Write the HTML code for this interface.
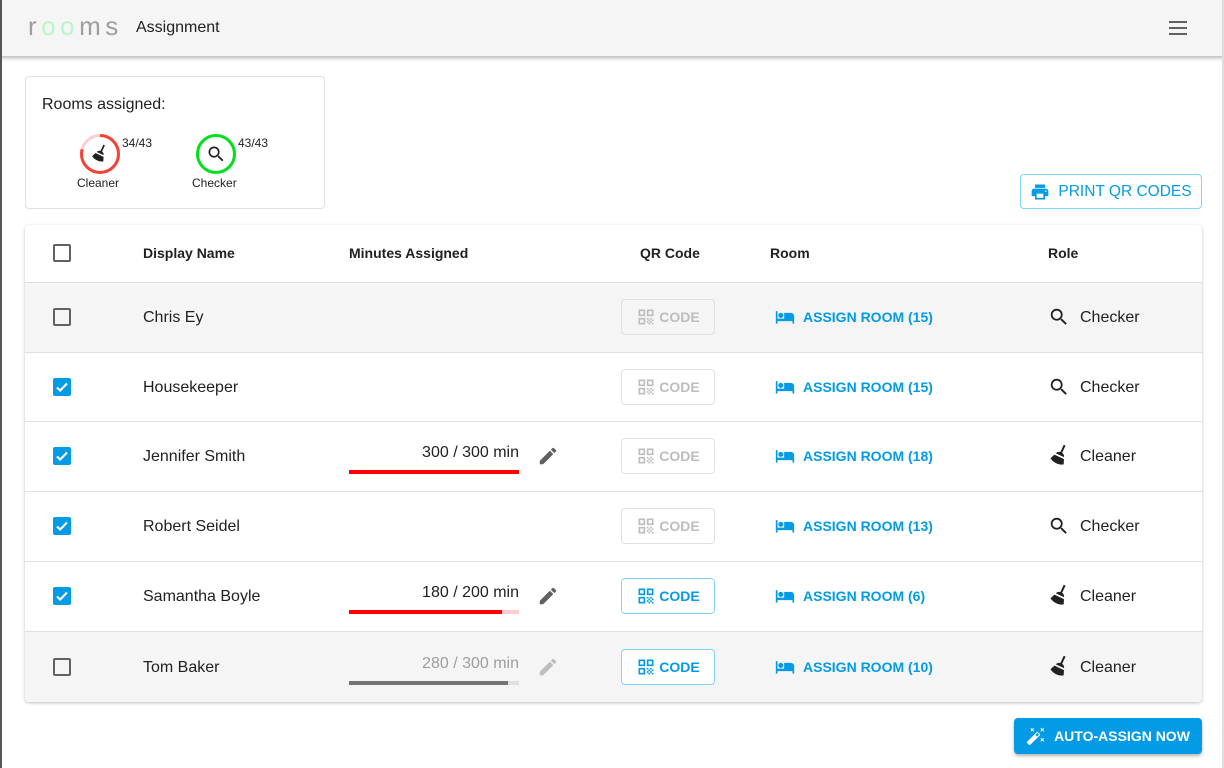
<!DOCTYPE html>
<html><head><meta charset="utf-8"><style>
*{box-sizing:border-box;margin:0;padding:0}
body{width:1224px;height:768px;overflow:hidden;background:#fff;font-family:"Liberation Sans",sans-serif;color:#212121;position:relative}
.abs{position:absolute}
.hdr{left:0;top:0;width:1224px;height:56px;background:#f5f5f5;box-shadow:0 2px 4px rgba(0,0,0,.3);z-index:2}
.card{background:#fff;border-radius:4px}
.row{left:25px;width:1177px;height:70px;border-top:1px solid #e0e0e0}
.cb{width:18px;height:18px;border:2px solid #616161;border-radius:2px}
.cbon{width:18px;height:18px;background:#039be5;border-radius:2px}
.t{font-size:16px;white-space:nowrap}
.btn{border:1px solid #81d4fa;border-radius:4px;color:#039be5;font-size:14px;display:flex;align-items:center;justify-content:center;gap:3px;background:#fff}
.dis{border-color:#e0e0e0;color:#bdbdbd;background:transparent}
.link{color:#039be5;font-size:14px;font-weight:bold;display:flex;align-items:center;gap:8px;white-space:nowrap}
</style></head><body>
<div class="abs" style="left:0;top:0;width:2px;height:768px;background:#555;z-index:3"></div>
<div class="abs" style="left:1222px;top:0;width:2px;height:768px;background:#ddd;z-index:3"></div>
<div class="abs hdr">
 <div class="abs" style="left:28px;top:11px;font-size:26px;letter-spacing:4.5px;color:#9e9e9e"><span>r</span><span style="color:#b9f6ca">oo</span><span>ms</span></div>
 <div class="abs t" style="left:136px;top:19px">Assignment</div>
 <svg class="abs" style="left:1168px;top:19px" width="20" height="18" viewBox="0 0 20 18"><rect x="1" y="2" width="18" height="2" fill="#616161"/><rect x="1" y="8" width="18" height="2" fill="#616161"/><rect x="1" y="14" width="18" height="2" fill="#616161"/></svg>
</div>

<div class="abs card" style="left:25px;top:76px;width:300px;height:133px;border:1px solid #e0e0e0">
 <div class="abs t" style="left:16px;top:19px">Rooms assigned:</div>
 <svg class="abs" style="left:52px;top:56px" width="44" height="44" viewBox="0 0 44 44">
  <circle cx="22" cy="21" r="18.5" fill="none" stroke="#ffcdd2" stroke-width="3"/>
  <circle cx="22" cy="21" r="18.5" fill="none" stroke="#f44336" stroke-width="3" stroke-dasharray="91.8 200" transform="rotate(-90 22 21)"/>
  <g transform="translate(12 11) scale(.85)"><path fill="#212121" transform="rotate(-20 12 12)" d="M19.36,2.72L20.78,4.14L15.06,9.85C16.13,11.39 16.28,13.24 15.38,14.44L9.06,8.12C10.26,7.22 12.11,7.37 13.65,8.44L19.36,2.72M5.93,17.57C3.92,15.56 2.69,13.16 2.35,10.92L7.23,8.83L14.67,16.27L12.58,21.15C10.34,20.81 7.94,19.58 5.93,17.57Z"/></g>
 </svg>
 <div class="abs" style="left:96px;top:59px;font-size:12px">34/43</div>
 <div class="abs" style="left:51px;top:99px;font-size:12px">Cleaner</div>
 <svg class="abs" style="left:168px;top:56px" width="44" height="44" viewBox="0 0 44 44">
  <circle cx="22" cy="21" r="18.5" fill="none" stroke="#00e01a" stroke-width="3"/>
  <g transform="translate(12 11) scale(.85)"><path fill="#212121" d="M15.5 14h-.79l-.28-.27A6.471 6.471 0 0 0 16 9.5 6.5 6.5 0 1 0 9.5 16c1.61 0 3.090-.59 4.23-1.57l.27.28v.79l5 4.99L20.49 19l-4.99-5zm-6 0C7.01 14 5 11.99 5 9.5S7.01 5 9.5 5 14 7.01 14 9.5 11.99 14 9.5 14z"/></g>
 </svg>
 <div class="abs" style="left:212px;top:59px;font-size:12px">43/43</div>
 <div class="abs" style="left:166px;top:99px;font-size:12px">Checker</div>
</div>

<div class="abs btn" style="left:1020px;top:174px;width:182px;height:35px;font-size:15.5px;gap:8px">
 <svg width="20" height="20" viewBox="0 0 24 24"><path fill="#039be5" d="M19 8H5c-1.66 0-3 1.34-3 3v6h4v4h12v-4h4v-6c0-1.660-1.34-3-3-3zm-3 11H8v-5h8v5zm3-7c-.55 0-1-.45-1-1s.45-1 1-1 1 .45 1 1-.45 1-1 1zm-1-9H6v4h12V3z"/></svg>PRINT QR CODES</div>

<div class="abs card" style="left:25px;top:225px;width:1177px;height:477px;box-shadow:0 1px 3px rgba(0,0,0,.25)"></div>
<div class="abs cb" style="left:53px;top:244px"></div>
<div class="abs t" style="left:143px;top:245px;font-size:14px;font-weight:bold">Display Name</div>
<div class="abs t" style="left:349px;top:245px;font-size:14px;font-weight:bold">Minutes Assigned</div>
<div class="abs t" style="left:640px;top:245px;font-size:14px;font-weight:bold">QR Code</div>
<div class="abs t" style="left:770px;top:245px;font-size:14px;font-weight:bold">Room</div>
<div class="abs t" style="left:1048px;top:245px;font-size:14px;font-weight:bold">Role</div>

<div id="rows"></div>
<script>
var Q='M3 11h8V3H3v8zm2-6h4v4H5V5zM3 21h8v-8H3v8zm2-6h4v4H5v-4zM13 3v8h8V3h-8zm6 6h-4V5h4v4zM19 19h2v2h-2zM13 13h2v2h-2zM15 15h2v2h-2zM13 17h2v2h-2zM15 19h2v2h-2zM17 17h2v2h-2zM17 13h2v2h-2zM19 15h2v2h-2z';
var B='M7 13c1.66 0 3-1.34 3-3S8.66 7 7 7s-3 1.34-3 3 1.34 3 3 3zm12-6h-8v7H3V5H1v15h2v-3h18v3h2v-9c0-2.21-1.79-4-4-4z';
var P='M3 17.25V21h3.75L17.81 9.94l-3.75-3.75L3 17.25zM20.71 7.04a.996.996 0 0 0 0-1.41l-2.34-2.34a.996.996 0 0 0-1.41 0l-1.83 1.83 3.75 3.75 1.83-1.83z';
var S='M15.5 14h-.79l-.28-.27A6.471 6.471 0 0 0 16 9.5 6.5 6.5 0 1 0 9.5 16c1.61 0 3.09-.59 4.23-1.57l.27.28v.79l5 4.99L20.49 19l-4.99-5zm-6 0C7.01 14 5 11.99 5 9.5S7.01 5 9.5 5 14 7.01 14 9.5 11.99 14 9.5 14z';
var BR='M19.36,2.72L20.78,4.14L15.06,9.85C16.13,11.39 16.28,13.24 15.38,14.44L9.06,8.12C10.26,7.22 12.11,7.37 13.650,8.44L19.36,2.72M5.93,17.57C3.92,15.56 2.69,13.16 2.35,10.92L7.23,8.830L14.67,16.27L12.58,21.15C10.34,20.81 7.94,19.58 5.93,17.57Z';
var R=[[282,'Chris Ey',0,null,0,15,'C',1],[352,'Housekeeper',1,null,0,15,'C',0],[421,'Jennifer Smith',1,[300,300,'r'],0,18,'L',0],[491,'Robert Seidel',1,null,0,13,'C',0],[561,'Samantha Boyle',1,[180,200,'r'],1,6,'L',0],[631,'Tom Baker',0,[280,300,'g'],1,10,'L',1]];
var h='';
R.forEach(function(r,i){var y=r[0],hh=(i<5?R[i+1][0]:702)-y,c=y+hh/2;
h+='<div class="abs row" style="top:'+y+'px;height:'+hh+'px;background:'+(r[7]?'#f5f5f5':'#fff')+(i==5?';border-radius:0 0 4px 4px':'')+'"></div>';
h+=r[2]?'<div class="abs cbon" style="left:53px;top:'+(c-9)+'px"><svg width="18" height="18" viewBox="0 0 18 18"><path d="M4 9.5l3.2 3L14 5.5" stroke="#fff" stroke-width="2.2" fill="none"/></svg></div>':'<div class="abs cb" style="left:53px;top:'+(c-9)+'px"></div>';
h+='<div class="abs t" style="left:143px;top:'+(c-8)+'px">'+r[1]+'</div>';
if(r[3]){var m=r[3],g=m[2]=='g',f=Math.round(170*m[0]/m[1]);
h+='<div class="abs t" style="left:349px;width:170px;text-align:right;top:'+(c-12)+'px;color:'+(g?'#9e9e9e':'#212121')+'">'+m[0]+' / '+m[1]+' min</div>';
h+='<div class="abs" style="left:349px;top:'+(c+14)+'px;width:170px;height:4px;background:'+(g?'#e0e0e0':'#ffcdd2')+'"><div style="width:'+f+'px;height:4px;background:'+(g?'#757575':'#f00')+'"></div></div>';
h+='<svg class="abs" style="left:537px;top:'+(c-11)+'px" width="22" height="22" viewBox="0 0 24 24"><path fill="'+(g?'#bdbdbd':'#616161')+'" d="'+P+'"/></svg>';}
var on=r[4],col=on?'#039be5':'#bdbdbd';
h+='<div class="abs btn'+(on?'':' dis')+'" style="left:621px;top:'+(c-18)+'px;width:94px;height:36px;font-weight:bold"><svg width="20" height="20" viewBox="0 0 24 24"><path fill="'+col+'" d="'+Q+'"/></svg>CODE</div>';
h+='<div class="abs link" style="left:775px;top:'+(c-10)+'px"><svg width="20" height="20" viewBox="0 0 24 24"><path fill="#039be5" d="'+B+'"/></svg>ASSIGN ROOM ('+r[5]+')</div>';
h+=(r[6]=='C'?'<svg class="abs" style="left:1048px;top:'+(c-11)+'px" width="22" height="22" viewBox="0 0 24 24"><path fill="#212121" d="'+S+'"/></svg>':'<svg class="abs" style="left:1048px;top:'+(c-12)+'px" width="24" height="24" viewBox="0 0 24 24"><path fill="#212121" transform="rotate(-20 12 12)" d="'+BR+'"/></svg>');
h+='<div class="abs t" style="left:1080px;top:'+(c-8)+'px">'+(r[6]=='C'?'Checker':'Cleaner')+'</div>';
});
document.getElementById('rows').innerHTML=h;
</script>

<div class="abs" style="left:1014px;top:718px;width:188px;height:36px;background:#039be5;border-radius:4px;box-shadow:0 2px 3px rgba(0,0,0,.3);color:#fff;font-size:14px;font-weight:bold;display:flex;align-items:center;justify-content:center;gap:8px">
 <svg width="20" height="20" viewBox="0 0 24 24"><path fill="#fff" d="M7.5 5.6L10 7 8.6 4.5 10 2 7.5 3.4 5 2l1.4 2.5L5 7zm12 9.8L17 14l1.4 2.5L17 19l2.5-1.4L22 19l-1.4-2.5L22 14zM22 2l-2.5 1.4L17 2l1.4 2.5L17 7l2.5-1.4L22 7l-1.4-2.5zm-7.63 5.29a.996.996 0 0 0-1.410 0L1.29 18.96a.996.996 0 0 0 0 1.41l2.34 2.34c.39.39 1.02.39 1.41 0L16.7 11.05a.996.996 0 0 0 0-1.41l-2.33-2.35zm-1.03 5.49l-2.12-2.12 2.44-2.44 2.12 2.12-2.44 2.44z"/></svg>AUTO-ASSIGN NOW</div>
</body></html>
